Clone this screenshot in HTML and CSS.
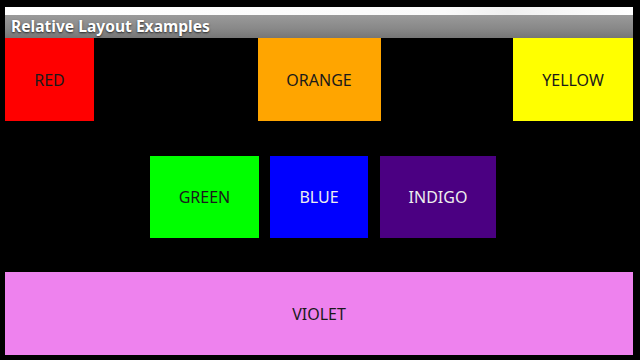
FILE: index.html
```html
<!DOCTYPE html>
<html lang="en">
<head>
    <meta charset="UTF-8">
    <meta name="viewport" content="width=device-width, initial-scale=1.0">
    <title>Relative Layout Examples</title>
    <link rel="stylesheet" href="styles.css">
</head>
<body>
    <div class="screen">
        <div class="status-bar"></div>
        <div class="title-bar">Relative Layout Examples</div>
        <div class="layout">
            <div class="row-top">
                <div class="box red">RED</div>
                <div class="box orange">ORANGE</div>
                <div class="box yellow">YELLOW</div>
            </div>
            <div class="row-middle">
                <div class="box green">GREEN</div>
                <div class="box blue">BLUE</div>
                <div class="box indigo">INDIGO</div>
            </div>
            <div class="box violet">VIOLET</div>
        </div>
    </div>
</body>
</html>
```

FILE: styles.css
```css
* {
    box-sizing: border-box;
    margin: 0;
    padding: 0;
}

body {
    background-color: #000;
    font-family: 'Noto Sans', 'Open Sans', sans-serif;
    width: 640px;
    height: 360px;
    overflow: hidden;
}

.screen {
    display: flex;
    flex-direction: column;
    height: 360px;
    padding: 7px 7px 5px 5px;
}

/* Barra superior */
.status-bar {
    height: 8px;
    background: linear-gradient(to right, #fff 0%, #fafafa 70%, #f0f0f0 80%, #fff 100%);
}

.title-bar {
    height: 23px;
    background: linear-gradient(to bottom, #9a9a9a, #888 60%, #767676);
    color: #fff;
    font-weight: 700;
    font-size: 15.6px;
    line-height: 23px;
    padding-left: 6px;
    text-shadow: 0 1px 2px rgba(0, 0, 0, 0.7);
}

/* Area do layout */
.layout {
    flex: 1;
    display: flex;
    flex-direction: column;
    justify-content: space-between;
}

.row-top,
.row-middle {
    display: grid;
    grid-template-columns: 1fr auto 1fr;
}

.row-top .red {
    justify-self: start;
}

.row-top .yellow {
    justify-self: end;
}

/* azul no centro, verde a esquerda e indigo a direita */
.row-middle .green {
    justify-self: end;
    margin-right: 11px;
}

.row-middle .indigo {
    justify-self: start;
    margin-left: 12px;
}

.box {
    height: 83px;
    display: flex;
    align-items: center;
    justify-content: center;
    font-size: 16px;
    color: #1a1a1a;
}

.red { width: 89px; background-color: #ff0000; }
.orange { width: 123px; background-color: #ffa500; }
.yellow { width: 120px; background-color: #ffff00; }

.green { width: 109px; height: 82px; background-color: #00ff00; }
.blue { width: 98px; height: 82px; background-color: #0000ff; color: #eee; }
.indigo { width: 116px; height: 82px; background-color: #4b0082; color: #eee; }

.violet {
    width: 100%;
    background-color: #ee82ee;
}
```
